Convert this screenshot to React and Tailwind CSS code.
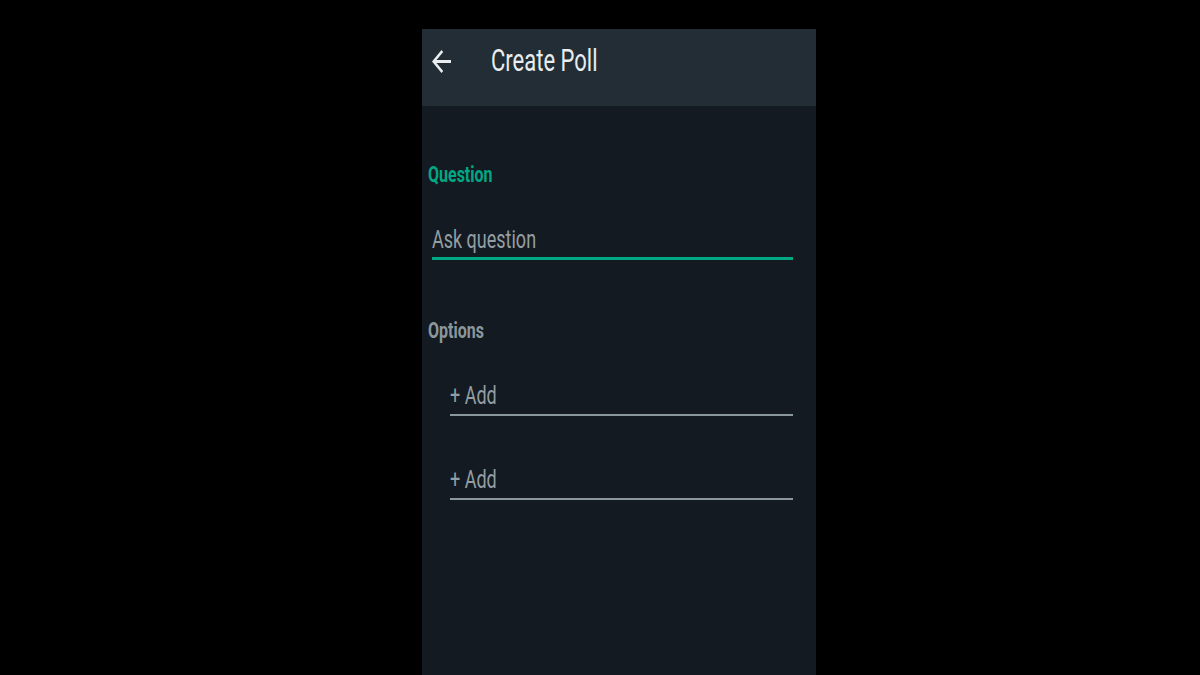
export default function App() {
  const font = { fontFamily: "Roboto, 'Noto Sans', sans-serif" };
  return (
    <div className="min-h-screen w-full bg-black pt-[29px] overflow-hidden" style={font}>
      <div className="ml-[422px] w-[394px] h-[646px] bg-[#141a21] flex flex-col">
        <div className="h-[77px] bg-[#222d35] flex items-center shrink-0">
          <svg className="ml-[10px] -mt-[13px]" width="19" height="23" viewBox="4 4 16 16" preserveAspectRatio="none">
            <path d="M20 11H7.83l5.59-5.59L12 4l-8 8 8 8 1.41-1.41L7.83 13H20v-2z" fill="#e9edef" />
          </svg>
          <div className="ml-[40px] -mt-[13px] h-[30px] flex items-center">
            <span className="inline-block text-[22px] font-normal text-[#e9edef] scale-y-[1.45] leading-none">Create Poll</span>
          </div>
        </div>
        <div className="pl-[6px] flex flex-col">
          <div className="mt-[59px] h-[20px] flex items-center">
            <span className="inline-block text-[16px] font-bold text-[#00a884] scale-y-[1.35] leading-none">Question</span>
          </div>
          <div className="mt-[35px] ml-[4px] w-[361px] h-[40px] border-b-[3px] border-[#00a884] flex items-center">
            <span className="inline-block text-[18px] font-normal text-[#939ea4] scale-y-[1.45] leading-none">Ask question</span>
          </div>
          <div className="mt-[61px] h-[20px] flex items-center">
            <span className="inline-block text-[16px] font-bold text-[#8b979e] scale-y-[1.35] leading-none">Options</span>
          </div>
          <div className="mt-[35px] ml-[22px] w-[343px] h-[40px] border-b-2 border-[#8b979e] flex items-center">
            <span className="inline-block text-[18px] font-normal text-[#939ea4] scale-y-[1.45] leading-none">+ Add</span>
          </div>
          <div className="mt-[44px] ml-[22px] w-[343px] h-[40px] border-b-2 border-[#8b979e] flex items-center">
            <span className="inline-block text-[18px] font-normal text-[#939ea4] scale-y-[1.45] leading-none">+ Add</span>
          </div>
        </div>
      </div>
    </div>
  );
}
